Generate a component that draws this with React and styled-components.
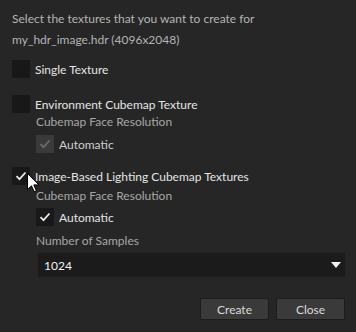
import styled, { createGlobalStyle } from "styled-components";

const GlobalStyle = createGlobalStyle`
  html, body {
    margin: 0;
    padding: 0;
    background: #262626;
  }
  body {
    font-family: Lato, "Noto Sans", sans-serif;
    font-size: 12px;
  }
`;

const Dialog = styled.div`
  position: relative;
  width: 356px;
  height: 332px;
  box-sizing: border-box;
  padding: 8px 11px 0 12px;
  display: flex;
  flex-direction: column;
  color: #d8d8d8;
`;

const Intro = styled.p`
  margin: 0;
  color: #b4b4b4;
  line-height: 21px;
`;

const Options = styled.div`
  display: flex;
  flex-direction: column;
  margin-top: 10px;
`;

const Row = styled.label`
  display: flex;
  align-items: center;
  gap: 5px;
  height: 18px;
  margin-top: ${(p) => p.$top || 0}px;
  color: ${(p) => (p.$disabled ? "#cfcfcf" : "#e4e4e4")};
`;

const Box = styled.span`
  width: 18px;
  height: 18px;
  flex: none;
  display: flex;
  align-items: center;
  justify-content: center;
  background: ${(p) => (p.$disabled ? "#3a3a3a" : "#181818")};
`;

const Group = styled.div`
  display: flex;
  flex-direction: column;
  padding-left: 24px;
`;

const SubLabel = styled.div`
  color: #a6a6a6;
  height: 18px;
  line-height: 18px;
  margin-top: ${(p) => p.$top || 0}px;
`;

const Select = styled.div`
  margin-top: 3px;
  margin-left: 2px;
  width: 307px;
  height: 24px;
  box-sizing: border-box;
  background: #1b1b1b;
  display: flex;
  align-items: center;
  justify-content: space-between;
  padding: 0 4px 0 6px;
  color: #f0f0f0;
`;

const Footer = styled.div`
  display: flex;
  justify-content: flex-end;
  gap: 7px;
  margin-top: 21px;
`;

const Button = styled.button`
  width: 69px;
  height: 22px;
  box-sizing: border-box;
  background: #3a3a3a;
  border: 1px solid #1c1c1c;
  border-radius: 2px;
  color: #dadada;
  font: inherit;
  padding: 0;
`;

const Cursor = styled.svg`
  position: absolute;
  left: 27px;
  top: 173px;
`;

const Check = ({ color }) => (
  <svg width="12" height="10" viewBox="0 0 12 10">
    <path d="M1.5 5.2 L4.5 8.2 L10.5 1.5" fill="none" stroke={color} strokeWidth="1.8" />
  </svg>
);

const CheckRow = ({ checked, disabled, top, children }) => (
  <Row $top={top} $disabled={disabled}>
    <Box $disabled={disabled}>
      {checked && <Check color={disabled ? "#6c6c6c" : "#e8e8e8"} />}
    </Box>
    {children}
  </Row>
);

const App = () => {
  return (
    <>
      <GlobalStyle />
      <Dialog>
        <Intro>
          Select the textures that you want to create for
          <br />
          my_hdr_image.hdr (4096x2048)
        </Intro>
        <Options>
          <CheckRow>Single Texture</CheckRow>
          <CheckRow top={17}>Environment Cubemap Texture</CheckRow>
          <Group>
            <SubLabel>Cubemap Face Resolution</SubLabel>
            <CheckRow checked disabled top={4}>Automatic</CheckRow>
          </Group>
          <CheckRow checked top={14}>Image-Based Lighting Cubemap Textures</CheckRow>
          <Group>
            <SubLabel $top={2}>Cubemap Face Resolution</SubLabel>
            <CheckRow checked top={3}>Automatic</CheckRow>
            <SubLabel $top={6}>Number of Samples</SubLabel>
            <Select>
              <span>1024</span>
              <svg width="10" height="6" viewBox="0 0 10 6">
                <path d="M0 0 H10 L5 6 Z" fill="#f0f0f0" />
              </svg>
            </Select>
          </Group>
        </Options>
        <Footer>
          <Button>Create</Button>
          <Button>Close</Button>
        </Footer>
        <Cursor width="13" height="20" viewBox="0 0 13 20">
          <path
            d="M0.5 0.5 L0.5 16.5 L4.5 12.8 L7.2 18.8 L9.4 17.8 L6.8 11.9 L12 11.9 Z"
            fill="#ffffff"
            stroke="#000000"
            strokeWidth="1"
          />
        </Cursor>
      </Dialog>
    </>
  );
};

export default App;
